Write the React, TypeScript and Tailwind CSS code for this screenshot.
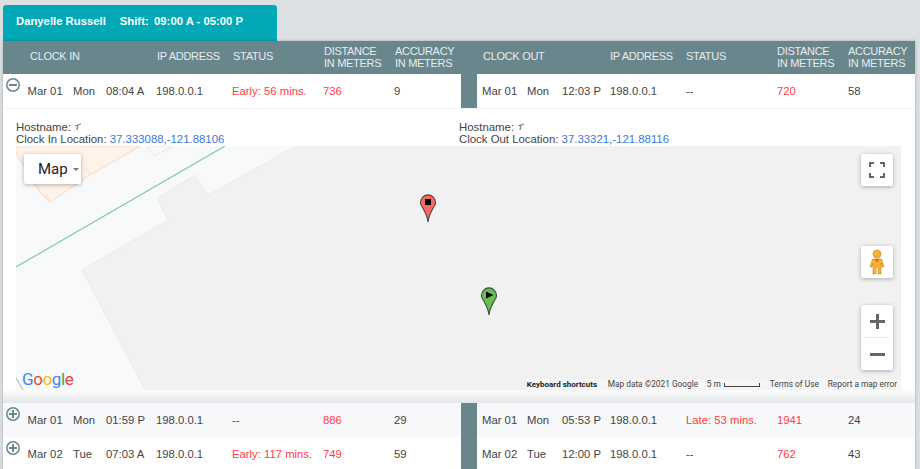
import React from 'react'

type Cell = { date: string; day: string; time: string; ip: string; status: string; dist: string; acc: string }
type Row = { open: boolean; bg: string; clockIn: Cell; clockOut: Cell }

const rows: Row[] = [
  {
    open: true,
    bg: 'bg-white',
    clockIn: { date: 'Mar 01', day: 'Mon', time: '08:04 A', ip: '198.0.0.1', status: 'Early: 56 mins.', dist: '736', acc: '9' },
    clockOut: { date: 'Mar 01', day: 'Mon', time: '12:03 P', ip: '198.0.0.1', status: '--', dist: '720', acc: '58' },
  },
  {
    open: false,
    bg: 'bg-[#f7f8fa]',
    clockIn: { date: 'Mar 01', day: 'Mon', time: '01:59 P', ip: '198.0.0.1', status: '--', dist: '886', acc: '29' },
    clockOut: { date: 'Mar 01', day: 'Mon', time: '05:53 P', ip: '198.0.0.1', status: 'Late: 53 mins.', dist: '1941', acc: '24' },
  },
  {
    open: false,
    bg: 'bg-white',
    clockIn: { date: 'Mar 02', day: 'Tue', time: '07:03 A', ip: '198.0.0.1', status: 'Early: 117 mins.', dist: '749', acc: '59' },
    clockOut: { date: 'Mar 02', day: 'Tue', time: '12:00 P', ip: '198.0.0.1', status: '--', dist: '762', acc: '43' },
  },
]

const ToggleIcon = ({ open }: { open: boolean }) => (
  <svg width="14" height="14" viewBox="0 0 14 14" fill="none" stroke="#6a868d" className="ml-[3px]">
    <circle cx="7" cy="7" r="6.2" strokeWidth="1.5" />
    <path d="M3 7h8" strokeWidth="2" />
    {!open && <path d="M7 3v8" strokeWidth="2" />}
  </svg>
)

const HostGlyph = () => (
  <svg width="8" height="8" viewBox="0 0 8 8" className="ml-[3px] inline-block align-baseline">
    <path d="M1 3 L7 1 M4 2 L3 7" stroke="#888" strokeWidth="1.3" fill="none" />
  </svg>
)

const HeadCells = () => (
  <>
    <div className="w-[76px] shrink-0">IP ADDRESS</div>
    <div className="w-[91px] shrink-0">STATUS</div>
    <div className="w-[71px] shrink-0 leading-[12px]">DISTANCE<br />IN METERS</div>
    <div className="w-[67px] shrink-0 leading-[12px]">ACCURACY<br />IN METERS</div>
  </>
)

const DataCells = ({ c, dateW, dayW, timeW }: { c: Cell; dateW: string; dayW: string; timeW: string }) => (
  <>
    <div className={dateW}>{c.date}</div>
    <div className={dayW}>{c.day}</div>
    <div className={timeW}>{c.time}</div>
    <div className="w-[76px] shrink-0">{c.ip}</div>
    <div className={`w-[91px] shrink-0 ${c.status === '--' ? '' : 'text-[#ff3b47]'}`}>{c.status}</div>
    <div className="w-[71px] shrink-0 text-[#ff3b47]">{c.dist}</div>
    <div className="w-[67px] shrink-0">{c.acc}</div>
  </>
)

const DataRow = ({ row }: { row: Row }) => (
  <div className={`flex h-[34px] ${row.bg} text-[11.3px] text-[#444]`}>
    <div className="flex w-[458px] shrink-0">
      <div className="w-[24.5px] shrink-0 pt-[4px]"><ToggleIcon open={row.open} /></div>
      <div className="flex items-center">
        <DataCells c={row.clockIn} dateW="w-[45.5px] shrink-0" dayW="w-[33px] shrink-0" timeW="w-[50px] shrink-0" />
      </div>
    </div>
    <div className="w-[16px] shrink-0 bg-[#6a868d]" />
    <div className="flex items-center pl-[5px]">
      <DataCells c={row.clockOut} dateW="w-[45px] shrink-0" dayW="w-[35px] shrink-0" timeW="w-[48px] shrink-0" />
    </div>
  </div>
)

const Pin = ({ fill, x, y, children }: { fill: string; x: number; y: number; children: React.ReactNode }) => (
  <g transform={`translate(${x} ${y})`}>
    <path d="M0 20 C-0.6 14 -2.5 11 -5.5 5.5 A7.5 7.5 0 1 1 5.5 5.5 C2.5 11 0.6 14 0 20 Z" fill={fill} stroke="#444" strokeWidth="1.1" />
    {children}
  </g>
)

const MapView = () => (
  <div className="relative h-[244px] w-[885px] overflow-hidden bg-[#f1f1f1] font-['Roboto',sans-serif]">
    <svg width="885" height="244" viewBox="0 0 885 244" className="absolute inset-0">
      <path d="M0 0 H280 L192 49 L179 29 L141 52 L152 74 L66 124 L129 244 H0 Z" fill="#f8f9fb" />
      <path d="M280 0 L192 49 L179 29 L141 52 L152 74 L66 124 L129 244" fill="none" stroke="#ebebeb" strokeWidth="1" />
      <path d="M0 7 L24 46 L34 56 L74 29 L124 0 H0 Z" fill="#fdf3ea" stroke="#f8e4d2" strokeWidth="1.5" />
      <path d="M74 29 L70 21 M34 56 L30 49 M24 46 L21 41" stroke="#f8e4d2" strokeWidth="1.5" />
      <path d="M132 0 L138 10 L157 0 Z" fill="#f8f9fb" stroke="#ece8e2" strokeWidth="1" />
      <path d="M0 121 L209 0" stroke="#86cb94" strokeWidth="1.2" />
      <path d="M0 232 L7 244" stroke="#86cb94" strokeWidth="1" />
      <Pin fill="#f96a62" x={412} y={56}>
        <rect x="-3" y="-3" width="6" height="6" fill="#000" />
      </Pin>
      <Pin fill="#66c04f" x={473} y={149}>
        <path d="M-3 -3.5 L4.5 0 L-3 3.5 Z" fill="#000" />
      </Pin>
    </svg>

    <div className="absolute left-[8px] top-[8px] flex h-[30px] w-[57px] items-center rounded-[2px] bg-white pl-[14px] text-[15px] text-[#222] shadow-[0_1px_4px_rgba(0,0,0,0.3)]">
      Map
      <span className="ml-[5px] h-0 w-0 border-x-[3px] border-t-[3px] border-x-transparent border-t-[#777]" />
    </div>

    <div className="absolute right-[8px] top-[8px] flex h-[32px] w-[32px] items-center justify-center rounded-[2px] bg-white shadow-[0_1px_4px_rgba(0,0,0,0.3)]">
      <svg width="16" height="16" viewBox="0 0 16 16" fill="none" stroke="#666" strokeWidth="2">
        <path d="M1 5V1h4M11 1h4v4M15 11v4h-4M5 15H1v-4" />
      </svg>
    </div>

    <div className="absolute right-[8px] top-[100px] flex h-[32px] w-[32px] items-center justify-center rounded-[2px] bg-white shadow-[0_1px_4px_rgba(0,0,0,0.3)]">
      <svg width="16" height="26" viewBox="0 0 16 26">
        <circle cx="8" cy="5" r="4" fill="#fdb32b" stroke="#b08a3a" strokeWidth="0.6" />
        <path d="M3.5 10 H12.5 L15 18 H13 L12 14 V25 H9 V18 H7 V25 H4 V14 L3 18 H1 Z" fill="#fdb32b" stroke="#b08a3a" strokeWidth="0.6" />
        <path d="M5.5 10 L8 14 L10.5 10 Z" fill="#ea6a2c" />
      </svg>
    </div>

    <div className="absolute right-[8px] top-[159px] flex h-[65px] w-[32px] flex-col items-center rounded-[2px] bg-white shadow-[0_1px_4px_rgba(0,0,0,0.3)]">
      <div className="flex h-[32px] items-center justify-center">
        <svg width="15" height="15" viewBox="0 0 15 15"><path d="M6 0h3v6h6v3H9v6H6V9H0V6h6z" fill="#666" /></svg>
      </div>
      <div className="h-px w-[24px] bg-[#e6e6e6]" />
      <div className="flex h-[32px] items-center justify-center">
        <svg width="15" height="15" viewBox="0 0 15 15"><path d="M0 6h15v3H0z" fill="#666" /></svg>
      </div>
    </div>

    <div className="absolute bottom-[1px] left-[6px] text-[17px] leading-[20px] tracking-[-0.4px]">
      <span className="text-[#4285f4]">G</span>
      <span className="text-[#ea4335]">o</span>
      <span className="text-[#fbbc05]">o</span>
      <span className="text-[#4285f4]">g</span>
      <span className="text-[#34a853]">l</span>
      <span className="text-[#ea4335]">e</span>
    </div>

    <div className="absolute bottom-0 right-0 flex h-[11px] items-center whitespace-nowrap bg-white/30 pr-[4px] text-[8.3px] leading-[11px] text-[#444]">
      <span className="w-[81px] text-[8px] font-bold text-[#222]">Keyboard shortcuts</span>
      <span className="w-[99px]">Map data ©2021 Google</span>
      <span className="w-[17px]">5 m</span>
      <span className="mr-[10px] h-[4px] w-[36px] border-x border-b border-[#444]" />
      <span className="w-[58px]">Terms of Use</span>
      <span>Report a map error</span>
    </div>
  </div>
)

const App: React.FC = () => {
  return (
    <div className="h-[469px] w-[920px] overflow-hidden bg-[#dce0e3] pl-[3px] pr-[5px] pt-[5px] font-['Liberation_Sans',Arial,sans-serif]">
      <div className="flex h-[36px] w-[274px] items-center gap-[14px] rounded-t-[3px] bg-[#00a9b5] pb-[3px] pl-[13px] text-[11.3px] font-bold text-white">
        <span>Danyelle Russell</span>
        <span>Shift:&nbsp;&thinsp;09:00 A - 05:00 P</span>
      </div>

      <div className="shadow-[0_0_3px_rgba(0,0,0,0.25)]">
        <div className="flex h-[33px] items-center bg-[#6a868d] pb-[2px] text-[11px] tracking-[-0.3px] text-[#e6eced]">
          <div className="flex w-[474px] shrink-0 items-center">
            <div className="w-[154px] shrink-0 pl-[27px]">CLOCK IN</div>
            <HeadCells />
          </div>
          <div className="w-[133px] shrink-0 pl-[6px]">CLOCK OUT</div>
          <HeadCells />
        </div>

        <DataRow row={rows[0]} />

        <div className="h-[295px] border-t border-[#f3f4f6] bg-gradient-to-b from-white from-[95%] to-[#e4e6e9]">
          <div className="flex h-[37px] flex-col justify-end text-[11.4px] leading-[12px] text-[#444]">
            <div className="flex pb-[1px] pl-[13px]">
              <div className="w-[443px] shrink-0">
                <div className="h-[12px]">Hostname:<HostGlyph /></div>
                <div className="h-[12px]">Clock In Location: <span className="text-[#3b78d8]">37.333088,-121.88106</span></div>
              </div>
              <div>
                <div className="h-[12px]">Hostname:<HostGlyph /></div>
                <div className="h-[12px]">Clock Out Location: <span className="text-[#3b78d8]">37.33321,-121.88116</span></div>
              </div>
            </div>
          </div>
          <div className="pl-[13px]"><MapView /></div>
        </div>

        <DataRow row={rows[1]} />
        <DataRow row={rows[2]} />
      </div>
    </div>
  )
}

export default App
